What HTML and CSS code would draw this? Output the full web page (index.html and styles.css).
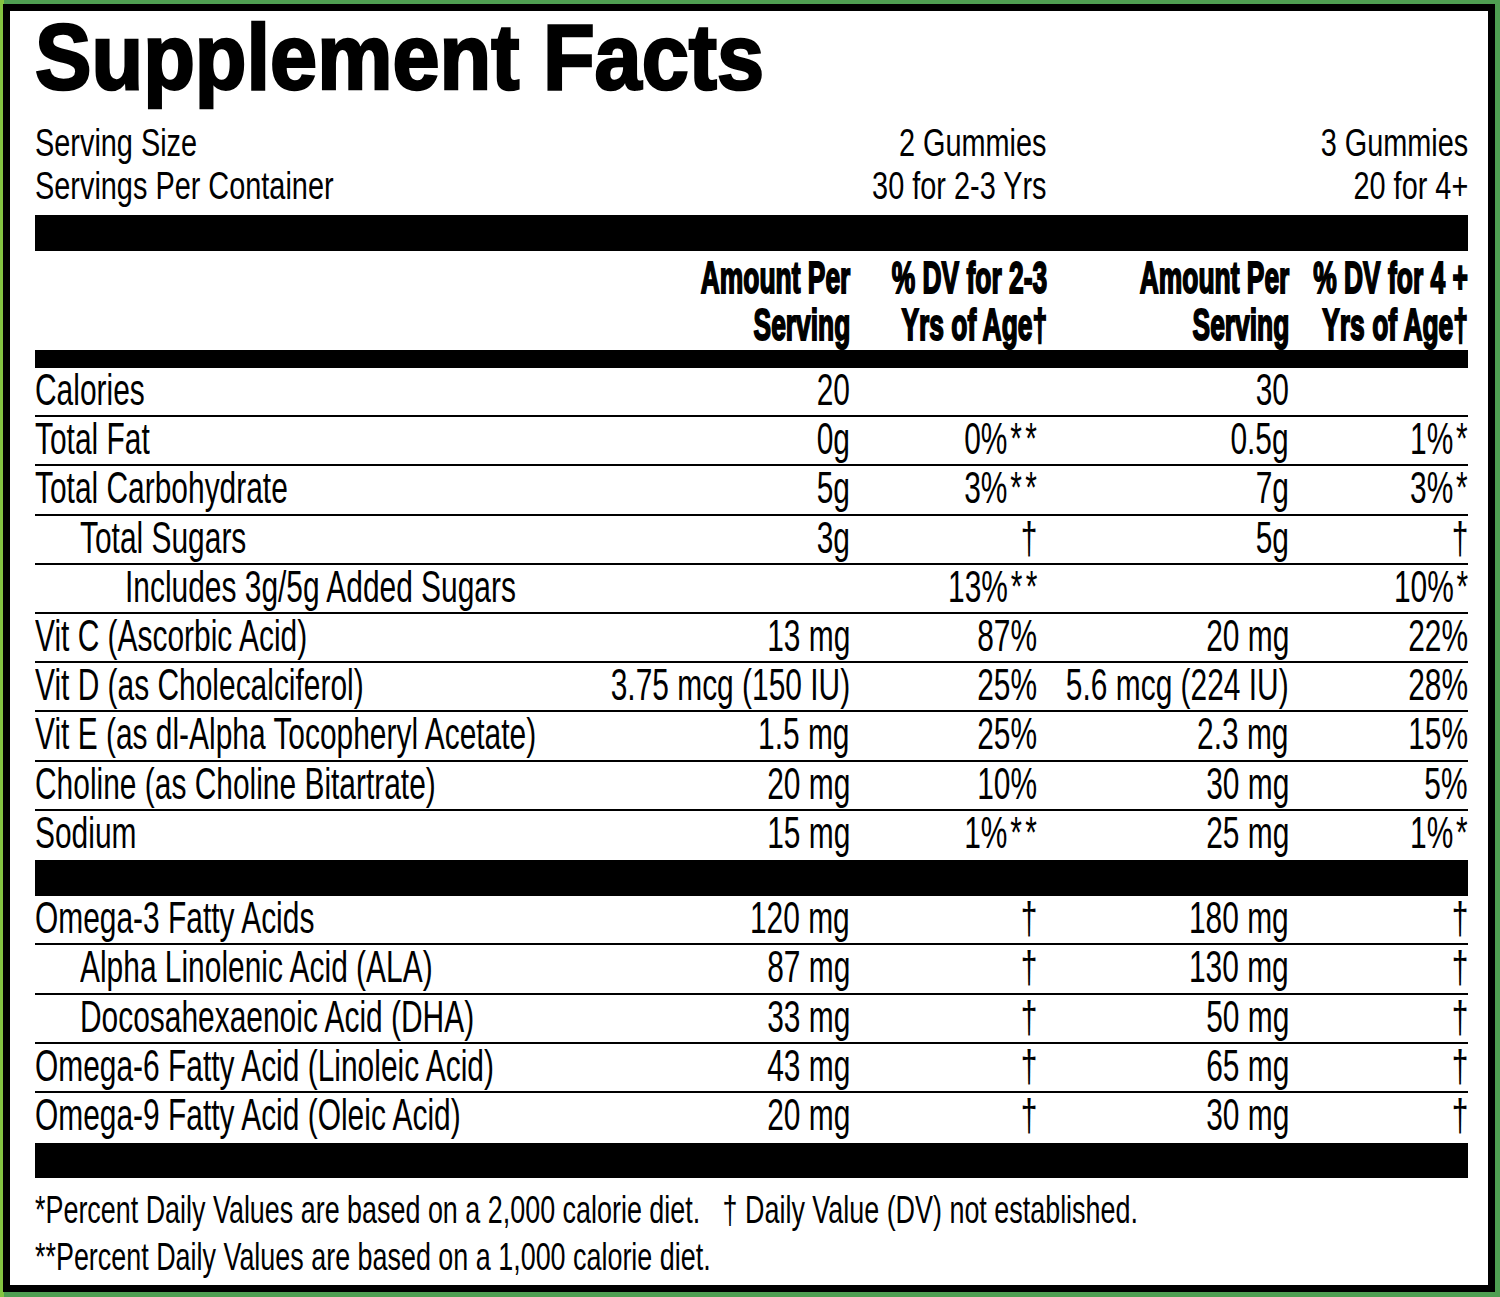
FILE: index.html
```html
<!DOCTYPE html>
<html lang="en">
<head>
<meta charset="utf-8">
<title>Supplement Facts</title>
<link rel="stylesheet" href="styles.css">
</head>
<body>
<div class="frame">
  <div class="sheet">
    <h1 class="title"><span>Supplement Facts</span></h1>

    <div class="serving">
      <div class="cell left"><span>Serving Size<br>Servings Per Container</span></div>
      <div class="cell"><span>2 Gummies<br>30 for 2-3 Yrs</span></div>
      <div class="cell"><span>3 Gummies<br>20 for 4+</span></div>
    </div>

    <div class="bar thick"></div>

    <div class="head">
      <div class="c name"></div>
      <div class="c"><span>Amount Per<br>Serving</span></div>
      <div class="c"><span>% DV for 2-3<br>Yrs of Age†</span></div>
      <div class="c"><span>Amount Per<br>Serving</span></div>
      <div class="c"><span>% DV for 4 +<br>Yrs of Age†</span></div>
    </div>

    <div class="bar medium"></div>

    <div class="group g1">
      <div class="row"><div class="c name"><span>Calories</span></div><div class="c"><span>20</span></div><div class="c dv"></div><div class="c"><span>30</span></div><div class="c"></div></div>
      <div class="row"><div class="c name"><span>Total Fat</span></div><div class="c"><span>0g</span></div><div class="c dv"><span>0%<i class="ast">**</i></span></div><div class="c"><span>0.5g</span></div><div class="c"><span>1%<i class="ast">*</i></span></div></div>
      <div class="row"><div class="c name"><span>Total Carbohydrate</span></div><div class="c"><span>5g</span></div><div class="c dv"><span>3%<i class="ast">**</i></span></div><div class="c"><span>7g</span></div><div class="c"><span>3%<i class="ast">*</i></span></div></div>
      <div class="row"><div class="c name ind1"><span>Total Sugars</span></div><div class="c"><span>3g</span></div><div class="c dv"><span>†</span></div><div class="c"><span>5g</span></div><div class="c"><span>†</span></div></div>
      <div class="row"><div class="c name ind2"><span>Includes 3g/5g Added Sugars</span></div><div class="c"></div><div class="c dv"><span>13%<i class="ast">**</i></span></div><div class="c"></div><div class="c"><span>10%<i class="ast">*</i></span></div></div>
      <div class="row"><div class="c name"><span>Vit C (Ascorbic Acid)</span></div><div class="c"><span>13 mg</span></div><div class="c dv"><span>87%</span></div><div class="c"><span>20 mg</span></div><div class="c"><span>22%</span></div></div>
      <div class="row"><div class="c name"><span>Vit D (as Cholecalciferol)</span></div><div class="c"><span>3.75 mcg (150 IU)</span></div><div class="c dv"><span>25%</span></div><div class="c"><span>5.6 mcg (224 IU)</span></div><div class="c"><span>28%</span></div></div>
      <div class="row"><div class="c name"><span>Vit E (as dl-Alpha Tocopheryl Acetate)</span></div><div class="c"><span>1.5 mg</span></div><div class="c dv"><span>25%</span></div><div class="c"><span>2.3 mg</span></div><div class="c"><span>15%</span></div></div>
      <div class="row"><div class="c name"><span>Choline (as Choline Bitartrate)</span></div><div class="c"><span>20 mg</span></div><div class="c dv"><span>10%</span></div><div class="c"><span>30 mg</span></div><div class="c"><span>5%</span></div></div>
      <div class="row"><div class="c name"><span>Sodium</span></div><div class="c"><span>15 mg</span></div><div class="c dv"><span>1%<i class="ast">**</i></span></div><div class="c"><span>25 mg</span></div><div class="c"><span>1%<i class="ast">*</i></span></div></div>
    </div>

    <div class="bar thick"></div>

    <div class="group g2">
      <div class="row"><div class="c name"><span>Omega-3 Fatty Acids</span></div><div class="c"><span>120 mg</span></div><div class="c dv"><span>†</span></div><div class="c"><span>180 mg</span></div><div class="c"><span>†</span></div></div>
      <div class="row"><div class="c name ind1"><span>Alpha Linolenic Acid (ALA)</span></div><div class="c"><span>87 mg</span></div><div class="c dv"><span>†</span></div><div class="c"><span>130 mg</span></div><div class="c"><span>†</span></div></div>
      <div class="row"><div class="c name ind1"><span>Docosahexaenoic Acid (DHA)</span></div><div class="c"><span>33 mg</span></div><div class="c dv"><span>†</span></div><div class="c"><span>50 mg</span></div><div class="c"><span>†</span></div></div>
      <div class="row"><div class="c name"><span>Omega-6 Fatty Acid (Linoleic Acid)</span></div><div class="c"><span>43 mg</span></div><div class="c dv"><span>†</span></div><div class="c"><span>65 mg</span></div><div class="c"><span>†</span></div></div>
      <div class="row"><div class="c name"><span>Omega-9 Fatty Acid (Oleic Acid)</span></div><div class="c"><span>20 mg</span></div><div class="c dv"><span>†</span></div><div class="c"><span>30 mg</span></div><div class="c"><span>†</span></div></div>
    </div>

    <div class="bar thick2"></div>

    <div class="foot">
      <p><span>*Percent Daily Values are based on a 2,000 calorie diet. &nbsp;&nbsp;† Daily Value (DV) not established.</span></p>
      <p><span>**Percent Daily Values are based on a 1,000 calorie diet.</span></p>
    </div>
  </div>
</div>
</body>
</html>
```

FILE: styles.css
```css
html, body {
  margin: 0;
  padding: 0;
}

body {
  background: linear-gradient(to right, #84c441 0, #84c441 4px, #4f9f52 4px);
  font-family: "Liberation Sans", Arial, sans-serif;
  color: #000;
  padding: 4px 5px 5px 3px;
  overflow: hidden;
}

.frame {
  border: 7px solid #000;
  background: #fff;
}

.sheet {
  padding: 0 20px 5px 25px;
}

/* Title */
.title {
  margin: 0;
  font-size: 92px;
  line-height: 92px;
  font-weight: 700;
}

.title span {
  display: inline-block;
  white-space: nowrap;
  transform: scaleX(0.92);
  transform-origin: left center;
  -webkit-text-stroke: 2.6px #000;
}

/* Serving block */
.serving {
  display: grid;
  grid-template-columns: 0 1012px 421px;
  margin-top: 19px;
  font-size: 38px;
  line-height: 43px;
}

.serving .cell {
  display: flex;
  justify-content: flex-end;
  min-width: 0;
}

.serving .cell.left {
  justify-content: flex-start;
}

.serving .cell span {
  display: inline-block;
  white-space: nowrap;
  text-align: right;
  transform: scaleX(0.76);
  transform-origin: right center;
}

.serving .cell.left span {
  text-align: left;
  transform-origin: left center;
}

/* Bars */
.bar {
  background: #000;
}

.bar.thick {
  height: 36px;
  margin-top: 7px;
}

.g1 + .bar.thick {
  margin-top: 0;
}

.bar.medium {
  height: 18px;
}

.bar.thick2 {
  height: 35px;
}

/* Table grid */
.head,
.row {
  display: grid;
  grid-template-columns: 625px 190px 197px 242px 179px;
}

.c {
  display: flex;
  justify-content: flex-end;
  min-width: 0;
}

.c > span {
  display: inline-block;
  white-space: nowrap;
  text-align: right;
  transform: scaleX(0.68);
  transform-origin: right center;
}

.c.name {
  justify-content: flex-start;
}

.c.name > span {
  text-align: left;
  transform-origin: left center;
}

.c.dv {
  padding-right: 10px;
}

.ind1 {
  padding-left: 45px;
}

.ind2 {
  padding-left: 90px;
}

.ast {
  font-style: normal;
  letter-spacing: 5px;
  margin-left: 4px;
  margin-right: -5px;
}

/* Header */
.head {
  height: 99px;
  box-sizing: border-box;
  padding-top: 3px;
  font-size: 44px;
  line-height: 47px;
  font-weight: 700;
}

.head .c > span {
  transform: scaleX(0.6);
  -webkit-text-stroke: 2px #000;
}

/* Rows */
.row {
  box-sizing: border-box;
  font-size: 44px;
  line-height: 44px;
  border-bottom: 2px solid #000;
}

.g1 .row {
  height: 49.2px;
}

.g2 .row {
  height: 49.4px;
}

.row:last-child {
  border-bottom: 0;
}

/* Footer */
.foot {
  padding-top: 8px;
  font-size: 39px;
  line-height: 47px;
  overflow: hidden;
}

.foot p {
  margin: 0;
  height: 47px;
}

.foot span {
  display: inline-block;
  white-space: nowrap;
  transform: scaleX(0.69);
  transform-origin: left center;
}
```
